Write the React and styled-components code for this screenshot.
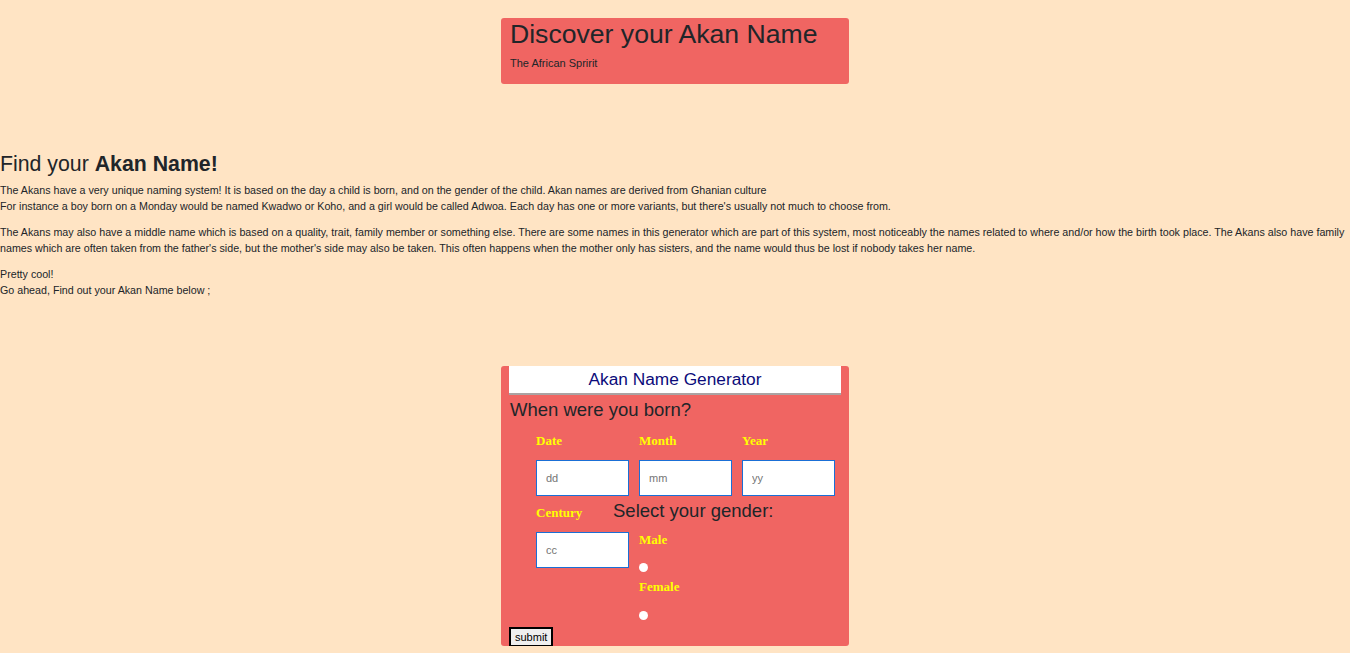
import React from "react";
import styled, { createGlobalStyle } from "styled-components";

const Global = createGlobalStyle`
  html, body { margin: 0; padding: 0; }
  body {
    background: #ffe4c4;
    font-family: "Liberation Sans", Arial, sans-serif;
    font-size: 10.7px;
    line-height: 16px;
    color: #212529;
  }
`;

const Page = styled.div`
  display: flex;
  flex-direction: column;
  padding-top: 18px;
`;

const HeaderCard = styled.header`
  width: 348px;
  box-sizing: border-box;
  margin: 0 auto;
  background: #f06562;
  border-radius: 3px;
  padding: 1px 9px 15px;
`;

const Title = styled.h1`
  margin: 0;
  font-size: 26.6px;
  font-weight: 400;
  line-height: normal;
  color: #212529;
`;

const Subtitle = styled.p`
  margin: 6.5px 0 0;
  font-size: 11px;
  line-height: normal;
`;

const Intro = styled.section`
  margin-top: 68px;
`;

const IntroHeading = styled.h2`
  margin: 0 0 5px;
  font-size: 21.3px;
  font-weight: 400;
  line-height: normal;
  b { font-weight: 700; }
`;

const Para = styled.p`
  margin: 0 0 10px;
`;

const GenCard = styled.form`
  width: 348px;
  box-sizing: border-box;
  margin: 58px auto 0;
  background: #f06562;
  border-radius: 3px;
  padding: 0 8px;
  display: flex;
  flex-direction: column;
  & > * { flex-shrink: 0; }
`;

const Band = styled.div`
  background: #fff;
  border-bottom: 2px solid #aaa3a3;
  height: 27px;
  display: flex;
  align-items: center;
  justify-content: center;
  font-size: 17.3px;
  color: #0b0b7a;
`;

const Question = styled.h3`
  margin: 4px 0 0 1px;
  font-size: 18.5px;
  font-weight: 400;
  line-height: normal;
  color: #212529;
`;

const Row = styled.div`
  display: flex;
  gap: 10px;
  margin-left: 27px;
`;

const Field = styled.div`
  display: flex;
  flex-direction: column;
  width: 93px;
  padding-top: ${(p) => p.$top}px;
`;

const Label = styled.label`
  font-family: "Liberation Serif", "Times New Roman", serif;
  font-weight: 700;
  font-size: 13px;
  line-height: normal;
  color: #ffff00;
`;

const TextInput = styled.input`
  box-sizing: border-box;
  width: 93px;
  height: 36px;
  margin-top: 11px;
  border: 1px solid #1a6fd6;
  outline: none;
  padding: 0 9px;
  font-family: "Liberation Sans", Arial, sans-serif;
  font-size: 11px;
  background: #fff;
  &::placeholder { color: #757575; }
`;

const Gender = styled.div`
  display: flex;
  flex-direction: column;
  margin-left: -26px;
  padding-top: 4px;
`;

const GenderHeading = styled.h3`
  margin: 0;
  font-size: 18.5px;
  font-weight: 400;
  line-height: normal;
  color: #212529;
`;

const Options = styled.div`
  display: flex;
  flex-direction: column;
  align-items: flex-start;
  padding-left: 26px;
`;

const OptLabel = styled(Label)`
  margin-top: ${(p) => p.$top}px;
`;

const Radio = styled.input`
  appearance: none;
  margin: 15.5px 0 0;
  width: 9px;
  height: 9px;
  border-radius: 50%;
  background: #fff;
  border: none;
`;

const Submit = styled.button`
  align-self: flex-start;
  margin: 7px 0 -1px;
  height: 20px;
  padding: 0 4px;
  border: 2px solid #000;
  background: #efefef;
  font-family: "Liberation Sans", Arial, sans-serif;
  font-size: 11px;
  color: #000;
`;

export default function App() {
  return (
    <>
      <Global />
      <Page>
        <HeaderCard>
          <Title>Discover your Akan Name</Title>
          <Subtitle>The African Spririt</Subtitle>
        </HeaderCard>

        <Intro>
          <IntroHeading>
            Find your <b>Akan Name!</b>
          </IntroHeading>
          <Para>
            The Akans have a very unique naming system! It is based on the day a child is born, and on the gender of the child. Akan names are derived from Ghanian culture
            <br />
            For instance a boy born on a Monday would be named Kwadwo or Koho, and a girl would be called Adwoa. Each day has one or more variants, but there's usually not much to choose from.
          </Para>
          <Para>
            The Akans may also have a middle name which is based on a quality, trait, family member or something else. There are some names in this generator which are part of this system, most noticeably the names related to where and/or how the birth took place. The Akans also have family names which are often taken from the father's side, but the mother's side may also be taken. This often happens when the mother only has sisters, and the name would thus be lost if nobody takes her name.
          </Para>
          <Para>
            Pretty cool!
            <br />
            Go ahead, Find out your Akan Name below ;
          </Para>
        </Intro>

        <GenCard onSubmit={(e) => e.preventDefault()}>
          <Band>Akan Name Generator</Band>
          <Question>When were you born?</Question>
          <Row>
            <Field $top={12}>
              <Label>Date</Label>
              <TextInput placeholder="dd" />
            </Field>
            <Field $top={12}>
              <Label>Month</Label>
              <TextInput placeholder="mm" />
            </Field>
            <Field $top={12}>
              <Label>Year</Label>
              <TextInput placeholder="yy" />
            </Field>
          </Row>
          <Row>
            <Field $top={9.7}>
              <Label>Century</Label>
              <TextInput placeholder="cc" />
            </Field>
            <Gender>
              <GenderHeading>Select your gender:</GenderHeading>
              <Options>
                <OptLabel $top={10}>Male</OptLabel>
                <Radio type="radio" name="gender" value="male" />
                <OptLabel $top={7}>Female</OptLabel>
                <Radio type="radio" name="gender" value="female" />
              </Options>
            </Gender>
          </Row>
          <Submit type="submit">submit</Submit>
        </GenCard>
      </Page>
    </>
  );
}
